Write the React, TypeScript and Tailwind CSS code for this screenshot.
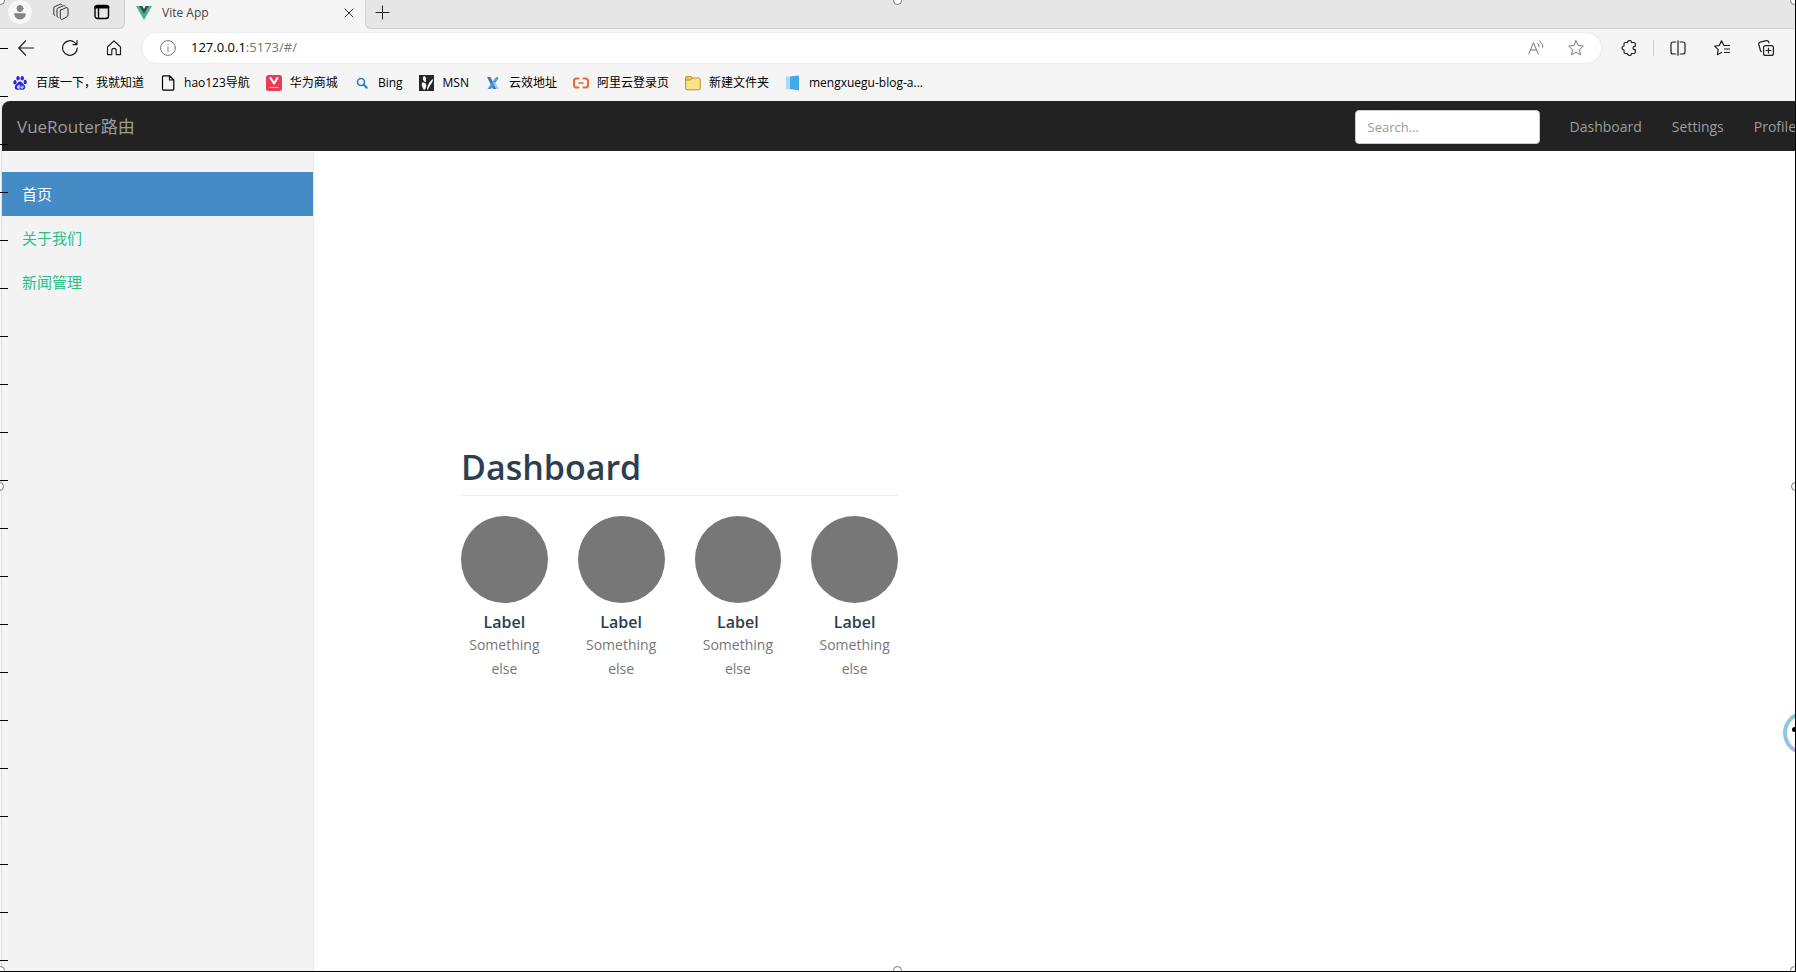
import React from 'react';
import { clsx } from 'clsx';

type IconProps = React.PropsWithChildren<{ className?: string; size?: number; width?: number }>;

const Icon: React.FC<IconProps> = ({ className, size = 16, width = 1, children }) => (
  <svg
    className={clsx('shrink-0', className)}
    width={size}
    height={size}
    viewBox={`0 0 ${size} ${size}`}
    fill="none"
    stroke="currentColor"
    strokeWidth={width}
    strokeLinecap="round"
    strokeLinejoin="round"
    aria-hidden="true">
    {children}
  </svg>
);

const STAR = 'M8 .8l2.200 4.700 5.100.6-3.800 3.500 1 5.200L8 12.300l-4.500 2.500 1-5.200L.7 6.100l5.100-.6z';

const bookmarks = [
  {
    title: '百度一下，我就知道',
    icon: (
      <Icon>
        <g fill="#2529d8" stroke="none">
          <ellipse cx="3" cy="7.200" rx="1.600" ry="2.200" />
          <ellipse cx="6" cy="3.200" rx="1.700" ry="2.300" />
          <ellipse cx="10.200" cy="3.200" rx="1.700" ry="2.300" />
          <ellipse cx="13.200" cy="7" rx="1.600" ry="2.200" />
          <path d="M8 6.600c2 0 2.700 2 4.200 3.200 1.700 1.500 1.300 5-1.300 5-1.200 0-1.800-.3-2.900-.3s-1.700.3-2.900.3c-2.600 0-3-3.500-1.300-5C5.300 8.600 6 6.600 8 6.600z" />
        </g>
        <path d="M7 10v3.200M7 11.200H5.500v1.800H7M9 11v2h2v-2" stroke="#fff" strokeWidth="0.900" />
      </Icon>
    ),
  },
  {
    title: 'hao123导航',
    icon: (
      <Icon width={1.2}>
        <path d="M3.500.8h6L13.800 5v9.200a1 1 0 0 1-1 1H3.500a1 1 0 0 1-1-1V1.800a1 1 0 0 1 1-1zM9.500.8V5h4.300" />
      </Icon>
    ),
  },
  {
    title: '华为商城',
    icon: (
      <Icon>
        <rect width="16" height="16" rx="2.500" fill="#e93d55" stroke="none" />
        <path d="M4.500 3L8 8.500 11.500 3" stroke="#fff" strokeWidth="2" />
        <path d="M4 12.500h8" stroke="#fff" strokeWidth="1" strokeDasharray="1.500 1" opacity=".7" />
      </Icon>
    ),
  },
  {
    title: 'Bing',
    icon: (
      <Icon className="text-[#2b7cc4]" width={1.6}>
        <circle cx="7" cy="7" r="3.500" />
        <path d="M9.800 9.800l3 3" strokeWidth="2" />
      </Icon>
    ),
  },
  {
    title: 'MSN',
    icon: (
      <Icon>
        <rect width="15" height="16" fill="#262626" stroke="none" />
        <g fill="#fff" stroke="none">
          <path d="M5 1c2 .5 2.500 3.500 1.700 6.200C4 6.500 3 2.500 5 1z" />
          <path d="M3.200 7.500c2.500-.2 3.800.8 4 2.500.2 2-.7 4-2 5C3.700 13.800 1.700 9 3.200 7.500z" />
          <path d="M14 4c.3 3-2.200 5-3.400 7.300C9.800 13 9 14.500 8 15c.2-4 2-8.500 6-11z" />
        </g>
      </Icon>
    ),
  },
  {
    title: '云效地址',
    icon: (
      <Icon>
        <path d="M2 2h3.500l5.800 12H8z" fill="#3679c8" stroke="none" />
        <path d="M10 3.500l2.500-2 1 2L6 14H2.500z" fill="#4f97dd" stroke="none" />
        <path d="M8 7.500L11.500 14H14L9.800 7z" fill="#9ec9f0" stroke="none" />
      </Icon>
    ),
  },
  {
    title: '阿里云登录页',
    icon: (
      <Icon className="text-[#ee6a2c]" width={2}>
        <path d="M5.500 3.500H3.500C2 3.500 1 4.500 1 6v4c0 1.500 1 2.500 2.500 2.500h2M10.500 3.500h2C14 3.500 15 4.500 15 6v4c0 1.500-1 2.500-2.500 2.500h-2" />
        <path d="M6 8h4" strokeWidth="1.500" />
      </Icon>
    ),
  },
  {
    title: '新建文件夹',
    icon: (
      <Icon className="text-[#b8942c]">
        <path d="M.6 4V3a1.500 1.500 0 0 1 1.500-1.500h3.600L7.500 3h6.200A1.600 1.600 0 0 1 15.300 4.600v8.700a1.500 1.500 0 0 1-1.500 1.500H2.100A1.500 1.500 0 0 1 .6 13.300z" fill="#fbe288" />
        <path d="M.8 5h4.700l2-2-1.800-1.500H2.100A1.500 1.500 0 0 0 .8 3z" fill="#f0cf4e" />
      </Icon>
    ),
  },
  {
    title: 'mengxuegu-blog-a...',
    icon: (
      <Icon>
        <path d="M1 1.500h5v13H1z" fill="#a9dafa" stroke="none" />
        <path d="M5 1.500L14 .5v15L5 14z" fill="#45a8ea" stroke="none" />
      </Icon>
    ),
  },
];

const menu = ['首页', '关于我们', '新闻管理'];
const navLinks = ['Dashboard', 'Settings', 'Profile'];

const TabStrip: React.FC = () => (
  <div className="flex h-[29px] bg-[#f5f5f5]">
    <div className="flex w-[125px] items-center rounded-br-md border-r border-b border-[#cfcfcf] bg-[#e6e6e6] pb-1 pl-2">
      <button aria-label="Profile" className="flex size-6 items-center justify-center rounded-full bg-[#f7f7f7]">
        <Icon size={16} className="text-[#858585]">
          <circle cx="8" cy="4.500" r="3" fill="currentColor" />
          <path d="M2.800 9.800h10.400v.7c0 2.500-2 4.500-5.200 4.500s-5.200-2-5.200-4.500z" fill="currentColor" />
        </Icon>
      </button>
      <button aria-label="Workspaces" className="ml-5">
        <Icon size={18} className="text-[#333]">
          <path d="M8.500 7.200l5.500-2.500a1.500 1.500 0 0 1 2 1.200v6.300a2 2 0 0 1-1 1.600l-4.500 2.500a1.500 1.500 0 0 1-2.200-1.300V8.500a1.500 1.500 0 0 1 .2-1.300z" />
          <path d="M6 14.500a1.500 1.500 0 0 1-1-1.500V6.500A1.500 1.500 0 0 1 6 5l5.500-2.300a1.500 1.500 0 0 1 1.800.5" />
          <path d="M2.800 12.500a1.500 1.500 0 0 1-1-1.500V5a1.500 1.500 0 0 1 1-1.500l5.500-2.300a1.500 1.500 0 0 1 1.700.5" />
        </Icon>
      </button>
      <button aria-label="Tab actions" className="ml-6 text-black">
        <Icon size={16} width={1.4}>
          <rect x="1" y="1.500" width="13.500" height="13" rx="2.500" />
          <path d="M1.500 3h12.500" strokeWidth="3" />
          <path d="M4.500 4v10" />
        </Icon>
      </button>
    </div>
    <div className="flex w-60 items-center pr-2 pb-1 pl-[11px]">
      <svg width="16" height="14" viewBox="0 0 16 14" aria-hidden="true">
        <path d="M0 0h3.200L8 8.200 12.800 0H16L8 14z" fill="#41b883" />
        <path d="M3.200 0h3L8 3.100 9.800 0h3L8 8.200z" fill="#35495e" />
      </svg>
      <span className="ml-[10px] flex-1 text-xs text-[#444]">Vite App</span>
      <button aria-label="Close tab" className="text-[#333]">
        <Icon>
          <path d="M4 4l8 8M12 4l-8 8" />
        </Icon>
      </button>
    </div>
    <div className="flex flex-1 items-center rounded-bl-md border-b border-l border-[#cfcfcf] bg-[#e6e6e6] pb-1 pl-2">
      <button aria-label="New tab" className="text-[#222]">
        <Icon>
          <path d="M8.500 2v13M2 8.500h13" />
        </Icon>
      </button>
    </div>
  </div>
);

const Toolbar: React.FC = () => (
  <div className="flex h-[38px] items-center pl-[18px] text-[#1f1f1f]">
    <button aria-label="Back">
      <Icon width={1.2}>
        <path d="M15.500 8H.8M7.500 1L.8 8l6.700 7" />
      </Icon>
    </button>
    <button aria-label="Refresh" className="ml-7">
      <Icon width={1.2}>
        <path d="M15.200 8A7.300 7.300 0 1 1 12.800 2.600L15 4.600M15 .6v4h-4" />
      </Icon>
    </button>
    <button aria-label="Home" className="ml-7">
      <Icon width={1.2}>
        <path d="M1.500 7L8 .9 14.500 7v7.600h-4.300V10.500a2.200 2.200 0 0 0-4.400 0v4.100H1.500z" />
      </Icon>
    </button>
    <div className="ml-5 flex h-[30px] flex-1 items-center rounded-full bg-white pr-[17px] pl-[18px] text-[#777] shadow-[0_0_2px_#ddd]">
      <Icon>
        <circle cx="8" cy="8" r="7.400" />
        <path d="M8 7v4.500M8 4.500v.3" />
      </Icon>
      <p className="ml-[15px] flex-1 text-[13px]">
        <span className="text-black">127.0.0.1</span>:5173/#/
      </p>
      <button aria-label="Read aloud">
        <Icon>
          <path d="M.8 14L5.500 2.500 10.200 14M2.400 10h6.200M9.500 3.200c1.200 1 1.600 2.300 1.500 3.600M11.500 1c2.400 1.600 3.400 3.900 3.200 6.200" />
        </Icon>
      </button>
      <button aria-label="Favorite" className="ml-6">
        <Icon>
          <path d={STAR} />
        </Icon>
      </button>
    </div>
    <div className="flex items-center pr-[22px] pl-5">
      <button aria-label="Extensions">
        <Icon width={1.2}>
          <path d="M4.500 2.500h2a2 2 0 0 1 4 0h2.300a1.500 1.500 0 0 1 1.500 1.500v2.300c-3-.3-3 3.600 0 3.300V12a1.500 1.500 0 0 1-1.500 1.500h-2.300a2 2 0 0 1-4 0h-2A1.500 1.500 0 0 1 3 12v-2a2 2 0 0 1 0-4V4a1.500 1.500 0 0 1 1.500-1.500z" />
        </Icon>
      </button>
      <span className="mx-4 h-4 w-px bg-[#cfcfcf]" />
      <button aria-label="Split screen">
        <Icon width={1.2}>
          <path d="M5.800 2H3a2 2 0 0 0-2 2v8a2 2 0 0 0 2 2h2.800M10.200 2H13a2 2 0 0 1 2 2v8a2 2 0 0 1-2 2h-2.800M8 .8v14.400" />
        </Icon>
      </button>
      <button aria-label="Favorites list" className="ml-7">
        <Icon width={1.2}>
          <path d="M15.500 5.500H10L7.500.8 5.300 5.500.7 6.200l3.500 3.500-.8 5.100L7.500 12.500M10.500 9h5M10.500 12.500h5" />
        </Icon>
      </button>
      <button aria-label="Collections" className="ml-7">
        <Icon width={1.2}>
          <rect x="5.600" y="5.600" width="9.800" height="9.800" rx="2" />
          <path d="M10.500 8v5M8 10.500h5M3.500 11.500L2.600 11 .8 4.500c-.3-1 .2-2 1.200-2.300L8.500.7c1-.2 1.900.3 2.200 1.300l.2 1" />
        </Icon>
      </button>
    </div>
  </div>
);

const Bookmarks: React.FC = () => (
  <nav className="flex h-[34px] items-center gap-4 pb-0.5 pl-3 text-xs text-black">
    {bookmarks.map((item) => (
      <a key={item.title} href="#" className="flex items-center gap-2 whitespace-nowrap">
        {item.icon}
        {item.title}
      </a>
    ))}
  </nav>
);

const Navbar: React.FC = () => (
  <header className="flex h-[50px] shrink-0 items-center overflow-hidden rounded-tl-lg bg-[#222] pt-px pl-[15px] text-[#9d9d9d]">
    <a href="#" className="flex-1 text-[17px]">
      VueRouter路由
    </a>
    <input
      aria-label="Search"
      placeholder="Search..."
      className="h-[34px] w-[185px] rounded border border-[#ccc] bg-white px-3 text-[13px] text-[#555] placeholder:text-[#999]"
    />
    <nav className="ml-[30px] flex gap-[30px] text-sm">
      {navLinks.map((link) => (
        <a key={link} href="#">
          {link}
        </a>
      ))}
    </nav>
  </header>
);

const Sidebar: React.FC = () => (
  <aside className="w-[312px] shrink-0 border-r border-[#e6e6e6] bg-[#f3f3f3] pt-5">
    <nav className="text-[15px]">
      {menu.map((item, i) => (
        <a
          key={item}
          href="#"
          className={clsx(
            'flex h-11 items-center px-5',
            i === 0 ? 'bg-[#458cc7] text-white' : 'text-[#2bc08a]',
          )}>
          {item}
        </a>
      ))}
    </nav>
  </aside>
);

const Dashboard: React.FC = () => (
  <main className="flex flex-1 items-center pt-1 pl-[147px]">
    <div className="w-[437px]">
      <h1 className="border-b border-[#eee] pb-2 text-[34px] leading-10 font-semibold text-[#2c3e50]">Dashboard</h1>
      <div className="mt-5 grid grid-cols-4 gap-[30px] text-center">
        {[1, 2, 3, 4].map((n) => (
          <div key={n}>
            <div className="aspect-square rounded-full bg-[#777]" />
            <h4 className="mt-2 text-base leading-[22px] font-semibold text-[#2c3e50]">Label</h4>
            <p className="text-sm leading-6 text-[#777]">Something else</p>
          </div>
        ))}
      </div>
    </div>
  </main>
);

const Handle: React.FC<{ className: string }> = ({ className }) => (
  <span className={clsx('absolute size-[9px] rounded-full border border-[#777] bg-white', className)} />
);

// Ruler ticks, resize handles and the frame that lie over the window
const Overlay: React.FC = () => (
  <div className="pointer-events-none absolute inset-0 overflow-hidden border-r border-b border-black">
    <div className="absolute top-0 left-0 flex flex-col">
      {Array.from({ length: 20 }, (_, i) => (
        <div key={i} className="mt-[47px] h-px w-2 bg-black first:mt-12" />
      ))}
    </div>
    <div className="absolute top-[711px] -right-8 flex size-11 rounded-full border-4 border-[#7cc9dc] border-b-[#b3b0dc] border-l-[#8fc6e0] bg-white pt-3 pl-[5px]">
      <span className="size-[5px] rounded-full bg-black" />
    </div>
    <Handle className="-top-1 -left-1" />
    <Handle className="-top-1 left-1/2 -ml-[5px]" />
    <Handle className="-top-1 -right-1" />
    <Handle className="top-1/2 -left-[5px] -mt-1" />
    <Handle className="top-1/2 -right-[5px] -mt-1" />
    <Handle className="-bottom-1 -left-1" />
    <Handle className="-bottom-1 left-1/2 -ml-[5px]" />
    <Handle className="-right-1 -bottom-1" />
  </div>
);

export default function App() {
  return (
    <div className="relative flex min-h-screen flex-col overflow-hidden bg-[#f5f5f5] font-['Open_Sans','Noto_Sans_CJK_SC',sans-serif]">
      <TabStrip />
      <Toolbar />
      <Bookmarks />
      <div className="ml-px flex flex-1 flex-col border-l border-[#e2e2e2]">
        <Navbar />
        <div className="flex flex-1 bg-white pt-px">
          <Sidebar />
          <Dashboard />
        </div>
      </div>
      <Overlay />
    </div>
  );
}
